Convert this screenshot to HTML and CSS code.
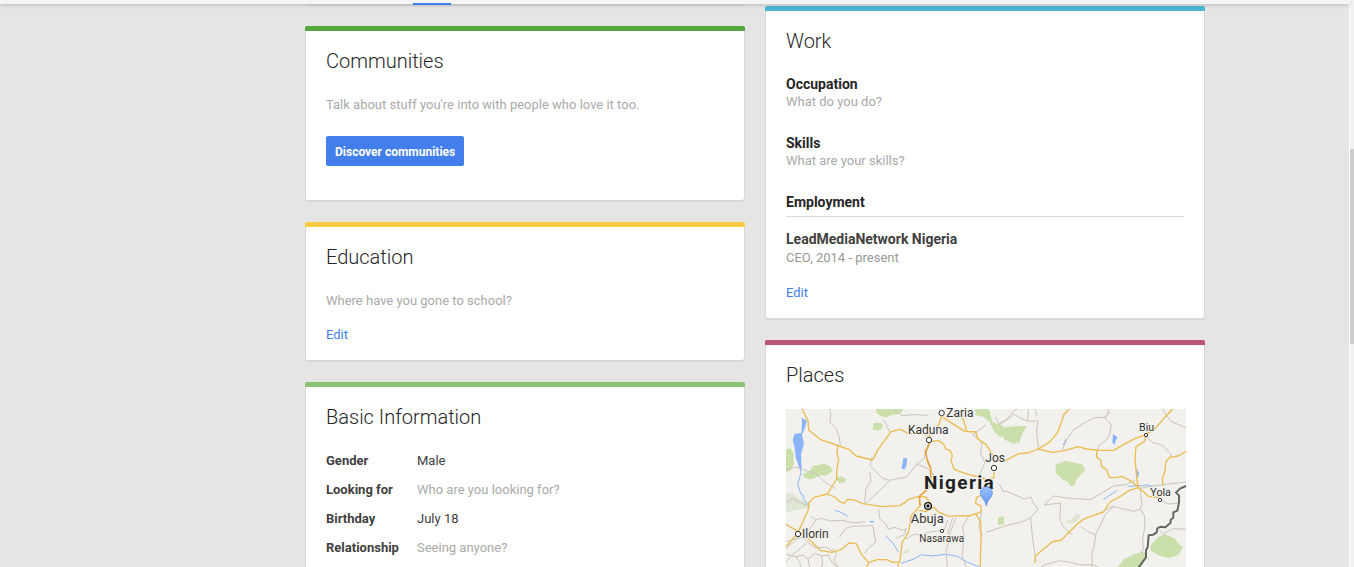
FILE: index.html
```html
<!DOCTYPE html>
<html lang="en">
<head>
<meta charset="utf-8">
<title>About</title>
<link rel="stylesheet" href="styles.css">
</head>
<body>
<header class="topbar"><span class="tab-marker"></span></header>
<main class="content">
  <div class="columns">
    <div class="column">
      <div class="card-end"></div>
      <section class="card green">
        <h2 class="title">Communities</h2>
        <p class="hint">Talk about stuff you're into with people who love it too.</p>
        <button class="button" type="button">Discover communities</button>
      </section>
      <section class="card yellow">
        <h2 class="title">Education</h2>
        <p class="hint">Where have you gone to school?</p>
        <a class="edit" href="#">Edit</a>
      </section>
      <section class="card lime">
        <h2 class="title">Basic Information</h2>
        <dl class="facts">
          <dt>Gender</dt><dd>Male</dd>
          <dt>Looking for</dt><dd class="hint">Who are you looking for?</dd>
          <dt>Birthday</dt><dd>July 18</dd>
          <dt>Relationship</dt><dd class="hint">Seeing anyone?</dd>
        </dl>
      </section>
    </div>
    <div class="column second">
      <section class="card cyan">
        <h2 class="title">Work</h2>
        <div class="entry">
          <h3 class="label">Occupation</h3>
          <p class="hint">What do you do?</p>
        </div>
        <div class="entry">
          <h3 class="label">Skills</h3>
          <p class="hint">What are your skills?</p>
        </div>
        <h3 class="label ruled">Employment</h3>
        <div class="job">
          <h4 class="employer">LeadMediaNetwork Nigeria</h4>
          <p class="period">CEO, 2014 - present</p>
        </div>
        <a class="edit" href="#">Edit</a>
      </section>
      <section class="card rose">
        <h2 class="title">Places</h2>
        <svg class="map" viewBox="0 12 1200 600" role="img" aria-label="Map of Nigeria">
          <defs>
            <linearGradient id="pin-fill" x1="0" y1="0" x2="0" y2="1">
              <stop offset="0" stop-color="#9cc1ff"/>
              <stop offset="1" stop-color="#5f95ee"/>
            </linearGradient>
          </defs>
          <rect class="land" y="12" width="1200" height="600"/>
          <g class="park">
            <path d="M270 12h80v6l-12 10-18 1-18 8-18-4-14-12z"/>
            <path d="M262 55l14-2 14 4-2 15-10 4-18-2z"/>
            <path d="M568 12h40l12 40 25 8 10 8 25-4 42-1-14 25-8 25-18 3-26-12-2-9-14 0-15-15-15-30-18-14-24-6z"/>
            <path d="M0 134l14-4 9 15v32l-8 18-15 6z"/>
            <path d="M50 208l22-10 8-15 34-7 18 8 8 14-20 14-18-1-25 12-22-4z"/>
            <path d="M148 218l18-4 14 8-4 10-16 3z"/>
            <path d="M808 180l30-13 20 5 30 6 10 16-14 15-12 12-8 22-8 1-12-14-16-8-18-18z"/>
            <path d="M636 338l18-5v25l-18 2z"/>
            <path d="M1094 420l22-24 20-8 30 12 12 18 12 7-12 25-30 9-30-8-24-14z"/>
            <path d="M992 490l22-28 32-15 30-7 5 10-20 50h-60z"/>
          </g>
          <g class="pale">
            <path d="M0 266l20-2 20 18 27 12 1 14-40 8-28 6z"/>
            <path d="M836 350l25-10 8-14 16 2-8 18-22 11z"/>
            <path d="M352 438l14-8 7 4-8 11-14 2z"/>
          </g>
          <g class="water">
            <path d="M47 38l16 9-4 14-7 21-4 8 6 25-9 33 2 45-6-2-12-35-3-28-6-24 6-18 20-2 2-24z"/>
            <path d="M352 160h12l-3 22-6 12-8-4z"/>
            <path d="M981 87l14 10-6 10-4 14-6-10z"/>
            <path d="M1052 190l7 14-2 12h-6z"/>
            <path d="M250 348h15l-4 5-8-1z"/>
          </g>
          <g class="river">
            <path d="M42 188l3 15-10 36 10 28 8 5-2 8 14 18"/>
            <path d="M147 316l20 7 18 11M299 392l20 20 19 30M346 475l35-12 26-14 30 4 42-5 36 6 30 18 36 14"/>
            <path d="M952 284l40-27M1025 244l42-2 18-2 14 5M832 120l8-18"/>
          </g>
          <g class="minor">
            <path d="M131 12l4 20-4 20 20 20 8 22 4 25"/>
            <path d="M324 12l24 20 36-3 40 2M310 80l-12-28-8-8M418 132l-3 28-25 20-28 36-52 10-20-6-38-38 6-26"/>
            <path d="M251 200l4 30-15 20-4 46M240 294l42-38 30-30M390 176l34 14 40 40M0 196l28-10 60 20 35 30 26 14"/>
            <path d="M0 294l20-13 30 15 22 8M72 332l17 13 15-5 30 8 35-2 35 8 34-4M0 430l30-25 20-25 16-2 24-33M0 410l30-9 22-3 20 20 15 10 35-1 22 15"/>
            <path d="M160 396l20-26 20-6 60-2 4 20 5 30-20 15-14 18"/>
            <path d="M278 312l3 30 18 14 8 17 20-6 20 8 14-2M360 370l-4 18-25 11"/>
            <path d="M0 470l18-20 20-15 22-20M0 448l30 7 20-5 16 12 20-17 20 8 25-3M30 455l12 18 3 30M66 462l6 30M106 453l4 22-8 25M125 450l15 25 20 12M140 430l12 18-8 16 12 25"/>
            <path d="M360 402l25-15 20 3 20-8 50-7 10-30M500 338l-14 42 2 30-8 30 4 50M510 338l-20 50M550 330l-20 35 4 32-6 55 12 35M586 322l-8 48 12 25M600 382l60-20 50-12 24-12 22-26-15-20-6-16-20 6-50-22-14-1-10-20"/>
            <path d="M600 60l-40 30 28 20-4 35 13 28-14 30-3 40"/>
            <path d="M628 36l10 20 23-12 22-26 10-6M640 60l45-32 15 10 24 10 32 0-4 30 5 54M728 12l-4 36M746 12l8 22"/>
            <path d="M829 135l10-25 22-34 30-20 32-18 36-1 14-16M968 12l-4 15-8 12 20 20-4 25-8 18-26 20-4 16"/>
            <path d="M1080 94l18 18 30 8 26 25v11M1130 12l12 20 14 18 20 8 24 10"/>
            <path d="M774 300l28-27 40 6 72 5 40-24 30-18 36-3 28-14M774 300l50-6-3 50 14 25 24 20M734 338l6 65 10 65M885 365l20 15 24 9 30-62 22-20M929 389l-4 30-8 30 2 20-6 30"/>
            <path d="M1062 250l6 50-6 13-20 6-62-15-20 10M1064 313l12 20v36l-6 30 2 35-8 10M1062 250l45-8 50-6 43-5M1110 274l34 23 31-2M1120 375l12 12 30-16 38 2M745 500l30-20 45-13 32 5 35 8 30-1 28 10"/>
          </g>
          <g class="major">
            <path d="M48 12l18 35 2 28 36 29 56 19 28 10 22 20 50 12 14-28 20-28 22-30 28-6 22 12 36 1 24 4"/>
            <path d="M155 119l-2 25 5 20-6 34 0 24-28 45-40 10-16 17-1 20-32 71-35 40"/>
            <path d="M124 267l22 9 14 13 15 6 10-12 20 2 24 11 60 9 52-3 16-9 10-10 30-8 22 1 12 16 0 12"/>
            <path d="M0 358l34 20 34 25 35 33 34 6 28-8 24-20 22 2 15 32 22 25 25-9 30 0 16 8 22-1 8-60 18-28 4-20 4-30 30-34M249 474l-10 15M338 472l-4 24M391 313l28 7 24-14"/>
            <path d="M444 306l12 14 32 14 30-2 30 1 25-8 13-5-2-18-15-6 2-18 15-8M568 325l16 25 1 55-3 95"/>
            <path d="M430 110l28-3 15 10 6 15 14 5 6 16-4 15 10 25 32 12 63 17"/>
            <path d="M467 24l-2 16-8 22-24 12-3 22M470 36l24 16 18 12 25 15 33 2 4 20 26 18 20 30 4 12"/>
            <path d="M542 78l-10-35-22-20M630 170l30-4 38-20 28-2 30-12 34-20 24-28 15-40 4-14 16-18"/>
            <path d="M756 132l44 10 35-5 42-12 25 7 35 4h46l35-20 30-16 32-11 30-21 30-35 20-21"/>
            <path d="M932 137l0 20 12 8 3 20 14 8 9 24 20 1 18-4 30 16 20 18"/>
            <path d="M1079 96l-4 14-25 15-3 37 4 40 2 26 5 20-28 8-30 20-28 15-20 30-30 10-26 10-20 14-50 50-28 6-30 25-20 18-2 20"/>
            <path d="M1058 248l14 12 15 14 28 3M1131 242l-2-20 8-25 2-26 12-14 25-4 24-14M625 200l-2 18-20 5"/>
          </g>
          <path class="trunk" d="M431 112l-12 30 5 24 10 24 0 50-20 22-14 12 2 28"/>
          <path class="border" d="M1200 243l-18 8-12 12 9 9 0 20-5 25-12 5 0 15-8 8 0 8-16 14-14-2-10 5-2 12-10 7-14 2-3 36-5 8 0 22-22 30-8 30"/>
          <g class="towns">
            <circle cx="467" cy="24" r="8"/><circle cx="429" cy="105" r="8"/>
            <circle cx="624" cy="189" r="8"/><circle cx="36" cy="387" r="8"/>
            <circle cx="468" cy="378" r="5"/><circle cx="1080" cy="90" r="5"/><circle cx="1122" cy="285" r="5"/>
          </g>
          <circle class="capital" cx="426" cy="303" r="10"/><circle cx="426" cy="303" r="5"/>
          <g class="places">
            <text x="481" y="37">Zaria</text>
            <text x="366" y="88">Kaduna</text>
            <text x="598" y="172">Jos</text>
            <text x="374" y="353" class="abuja">Abuja</text>
            <text x="48" y="398">Ilorin</text>
            <text x="400" y="412" class="small">Nasarawa</text>
            <text x="1059" y="78" class="mid">Biu</text>
            <text x="1093" y="273" class="mid">Yola</text>
            <text x="414" y="252" class="country">Nigeria</text>
          </g>
          <path class="pin" d="M601 303c-3-20-18-24-18-40a18 18 0 0 1 36 0c0 16-15 20-18 40z"/>
        </svg>
      </section>
    </div>
  </div>
</main>
<div class="scroll-track"><div class="scroll-thumb"></div></div>
</body>
</html>
```
FILE: styles.css
```css
* { box-sizing: border-box; }
body {
  margin: 0;
  height: 100vh;
  overflow: hidden;
  background: #e5e5e5;
  color: #404040;
  font: 13px/18px Roboto, "Liberation Sans", sans-serif;
}
h2, h3, h4, p, dl, dd { margin: 0; }

.topbar {
  position: fixed;
  z-index: 1;
  top: 0;
  left: 0;
  right: 5px;
  height: 4px;
  background: #f5f5f5;
  box-shadow: 0 1px 4px rgba(0, 0, 0, .2);
}
.tab-marker {
  position: absolute;
  top: 3px;
  left: 413px;
  width: 38px;
  height: 2px;
  background: #427fed;
}

.content { padding: 0 5px 0 161px; }
.columns {
  display: grid;
  grid-template-columns: 1fr 1fr;
  gap: 22px;
  max-width: 898px;
  margin: 0 auto;
}
.column {
  display: flex;
  flex-direction: column;
  gap: 22px;
}
.column.second { padding-top: 6px; }

.card, .card-end {
  background: #fff;
  border-radius: 2px;
  box-shadow: 0 1px 0 1px #d8d8d8;
}
.card-end { height: 4px; }
.card { padding: 0 20px 16px; }
.card::before {
  content: "";
  display: block;
  height: 5px;
  margin: 0 -21px 18px;
  border-radius: 2px 2px 0 0;
  background: var(--accent);
}
.green { --accent: #53a93f; padding-bottom: 34px; }
.yellow { --accent: #fbcb43; }
.lime { --accent: #8bc474; }
.cyan { --accent: #4bb8d3; }
.rose { --accent: #ba5375; }

.title {
  margin-bottom: 23px;
  color: #262626;
  font-size: 20px;
  font-weight: 300;
  line-height: 24px;
}
.rose .title { margin-bottom: 22px; }
.hint { color: #aaa; }
.button {
  display: block;
  height: 30px;
  margin-top: 22px;
  padding: 1px 9px 0;
  border: 0;
  border-radius: 2px;
  background: #427fed;
  color: #fff;
  font: bold 12px/30px Roboto, "Liberation Sans", sans-serif;
}
.edit {
  display: block;
  width: max-content;
  margin-top: 16px;
  color: #427fed;
  text-decoration: none;
}

.facts {
  display: grid;
  grid-template-columns: 91px 1fr;
  row-gap: 11px;
}
.facts dt { font-weight: bold; }

.entry { margin-bottom: 25px; line-height: 17px; }
.label {
  color: #262626;
  font-size: 14px;
  line-height: 17px;
}
.ruled {
  padding-bottom: 5px;
  border-bottom: 1px solid #d8d8d8;
}
.job { margin-top: 13px; }
.employer { font-size: 14px; }
.period { color: #999; line-height: 20px; }

.map {
  display: block;
  width: calc(100% + 2px);
  overflow: visible;
}
.map path { fill: none; stroke-linejoin: round; }
.land { fill: #f2f1ed; }
.map .park path { fill: #cadfaa; }
.map .pale path { fill: #dfe6d6; }
.map .water path { fill: #8ab4f8; }
.river { stroke: #8ab4f8; stroke-width: 3px; }
.minor { stroke: #cbc5b9; stroke-width: 3px; }
.major { stroke: #e9bd51; stroke-width: 4px; }
.trunk { stroke: #e8a33a; stroke-width: 5px; }
.border { stroke: #666; stroke-width: 6px; }
.towns { fill: #fff; stroke: #333; stroke-width: 3px; }
.capital { fill: #fff; stroke: #111; stroke-width: 4px; }
.places {
  fill: #333;
  stroke: #f5f4f0;
  stroke-width: 6px;
  stroke-linejoin: round;
  paint-order: stroke;
  font-size: 36px;
}
.places .abuja { font-size: 39px; }
.places .mid { font-size: 32px; }
.places .small { font-size: 30px; }
.places .country {
  fill: #222;
  font-size: 57px;
  font-weight: bold;
  letter-spacing: 4px;
}
.map .pin { fill: url(#pin-fill); stroke: #5b8be0; stroke-width: 2px; }

.scroll-track {
  position: fixed;
  top: 0;
  right: 0;
  bottom: 0;
  width: 5px;
  padding-top: 149px;
  border-left: 1px solid #fff;
  background: #f0f0f0;
}
.scroll-thumb { height: 195px; background: #cdcdcd; }
```
